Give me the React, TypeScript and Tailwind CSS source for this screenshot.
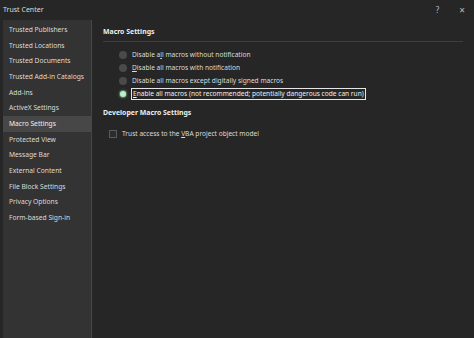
import React from "react";

const items = [
  "Trusted Publishers",
  "Trusted Locations",
  "Trusted Documents",
  "Trusted Add-in Catalogs",
  "Add-ins",
  "ActiveX Settings",
  "Macro Settings",
  "Protected View",
  "Message Bar",
  "External Content",
  "File Block Settings",
  "Privacy Options",
  "Form-based Sign-in",
];

function Radio({ checked }: { checked?: boolean }) {
  return (
    <span className="relative flex h-[8px] w-[8px] shrink-0 items-center justify-center rounded-full bg-[#4a4a4a]">
      {checked && <span className="h-[6px] w-[6px] rounded-full bg-[#bfeccb] shadow-[0_0_3px_#6ad08a]" />}
    </span>
  );
}

export default function App() {
  return (
    <div
      className="flex h-[338px] w-[474px] flex-col whitespace-nowrap bg-[#262626] text-[#dcdcdc]"
      style={{ fontFamily: '"Noto Sans", "Open Sans", sans-serif' }}
    >
      <div className="flex h-[20px] shrink-0 items-center justify-between pl-[3px] pr-[9px] text-[7px]">
        <span>Trust Center</span>
        <div className="flex items-center gap-[20px] text-[#bdbdbd]">
          <span className="text-[8px]">?</span>
          <span className="text-[10px] leading-none">×</span>
        </div>
      </div>
      <div className="flex flex-1">
        <div className="ml-[3px] flex w-[89px] flex-col border-r border-[#474747] bg-[#333333] pt-[2px] text-[6.7px]">
          {items.map((t) => (
            <div
              key={t}
              className={`flex h-[15.7px] items-center pl-[6px] ${t === "Macro Settings" ? "bg-[#474747] text-[#f0f0f0]" : ""}`}
            >
              {t}
            </div>
          ))}
        </div>
        <div className="flex flex-1 flex-col pl-[11px] pr-[11px] pt-[6px] text-[6.6px]">
          <div className="h-[12px] text-[6.9px] font-bold leading-[12px] text-[#eeeeee]">Macro Settings</div>
          <div className="mt-[3px] h-px bg-[#3e3e3e]" />
          <div className="mt-[6px] flex flex-col pl-[16px]">
            <div className="flex h-[13px] items-center gap-[5px]">
              <Radio />
              <span>
                Disable a<u>l</u>l macros without notification
              </span>
            </div>
            <div className="flex h-[13px] items-center gap-[5px]">
              <Radio />
              <span>
                <u>D</u>isable all macros with notification
              </span>
            </div>
            <div className="flex h-[13px] items-center gap-[5px]">
              <Radio />
              <span>
                Disable all macros except di<u>g</u>itally signed macros
              </span>
            </div>
            <div className="flex h-[14px] items-center gap-[4px]">
              <Radio checked />
              <span className="border border-[#e6e6e6] px-[1px] leading-[10px] text-[#f0f0f0]">
                <u>E</u>nable all macros (not recommended; potentially dangerous code can run)
              </span>
            </div>
          </div>
          <div className="mt-[6px] h-[12px] text-[6.9px] font-bold leading-[12px] text-[#eeeeee]">Developer Macro Settings</div>
          <div className="mt-[10px] flex items-center gap-[5px] pl-[6px]">
            <span className="h-[8px] w-[8px] shrink-0 border border-[#5a5a5a] bg-[#2c2c2c]" />
            <span>
              Trust access to the <u>V</u>BA project object model
            </span>
          </div>
        </div>
      </div>
    </div>
  );
}
